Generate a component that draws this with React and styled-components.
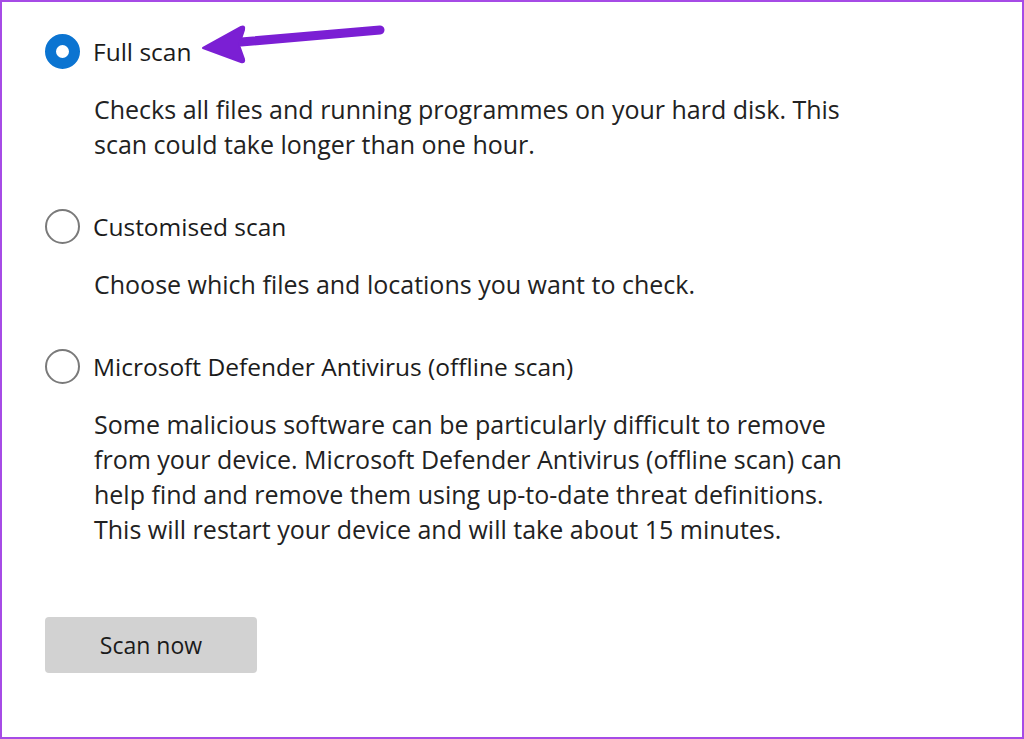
import React from 'react';
import styled, { createGlobalStyle } from 'styled-components';

const GlobalStyle = createGlobalStyle`
  html, body {
    margin: 0;
    padding: 0;
    background: #ffffff;
  }
  body {
    font-family: 'Open Sans', 'Noto Sans', sans-serif;
    color: #1b1b1b;
  }
`;

const options = [
  {
    label: 'Full scan',
    checked: true,
    text: [
      'Checks all files and running programmes on your hard disk. This',
      'scan could take longer than one hour.',
    ],
  },
  {
    label: 'Customised scan',
    text: ['Choose which files and locations you want to check.'],
  },
  {
    label: 'Microsoft Defender Antivirus (offline scan)',
    text: [
      'Some malicious software can be particularly difficult to remove',
      'from your device. Microsoft Defender Antivirus (offline scan) can',
      'help find and remove them using up-to-date threat definitions.',
      'This will restart your device and will take about 15 minutes.',
    ],
  },
];

function Arrow() {
  return (
    <ArrowSvg width="190" height="45" viewBox="0 0 190 45">
      <line x1="40" y1="21" x2="179" y2="9" stroke="#7b1fd4" strokeWidth="9" strokeLinecap="round" />
      <path d="M2 27 L40 6 Q44 4 43 9 L38 24 L43 38 Q44 42 40 41 Z" fill="#7b1fd4" stroke="#7b1fd4" strokeWidth="2" strokeLinejoin="round" />
    </ArrowSvg>
  );
}

export default function App() {
  return (
    <Frame>
      <GlobalStyle />
      <OptionList>
        {options.map((o, i) => (
          <Option key={i}>
            <OptionHead>
              <Radio checked={o.checked} />
              <Label>{o.label}</Label>
              {o.checked && <Arrow />}
            </OptionHead>
            <Description>
              {o.text.map((line, j) => (
                <Line key={j}>{line}</Line>
              ))}
            </Description>
          </Option>
        ))}
      </OptionList>
      <ScanButton>Scan now</ScanButton>
    </Frame>
  );
}

const Frame = styled.div`
  box-sizing: border-box;
  width: 1024px;
  height: 739px;
  border: 2px solid #a64be6;
  padding: 31px 0 0 43px;
  display: flex;
  flex-direction: column;
`;

const OptionList = styled.div`
  display: flex;
  flex-direction: column;
  gap: 46px;
`;

const Option = styled.div`
  display: flex;
  flex-direction: column;
  gap: 23px;
`;

const OptionHead = styled.div`
  position: relative;
  display: flex;
  align-items: center;
  gap: 13px;
  height: 36px;
`;

const Radio = styled.span`
  box-sizing: border-box;
  width: 35px;
  height: 35px;
  border-radius: 50%;
  flex-shrink: 0;
  border: ${p => (p.checked ? '11px solid #0b74d1' : '2.5px solid #7a7a7a')};
  background: #fff;
`;

const Label = styled.span`
  font-size: 24.5px;
  color: #1b1b1b;
`;

const ArrowSvg = styled.svg`
  position: absolute;
  left: 156px;
  top: -12px;
`;

const Description = styled.div`
  padding-left: 49px;
  font-size: 25px;
  line-height: 35px;
  color: #222;
`;

const Line = styled.div`
  white-space: nowrap;
`;

const ScanButton = styled.button`
  margin-top: 70px;
  width: 212px;
  height: 56px;
  border: none;
  border-radius: 4px;
  background: #d2d2d2;
  font-family: 'Open Sans', 'Noto Sans', sans-serif;
  font-size: 23px;
  color: #1b1b1b;
  padding: 0;
`;
